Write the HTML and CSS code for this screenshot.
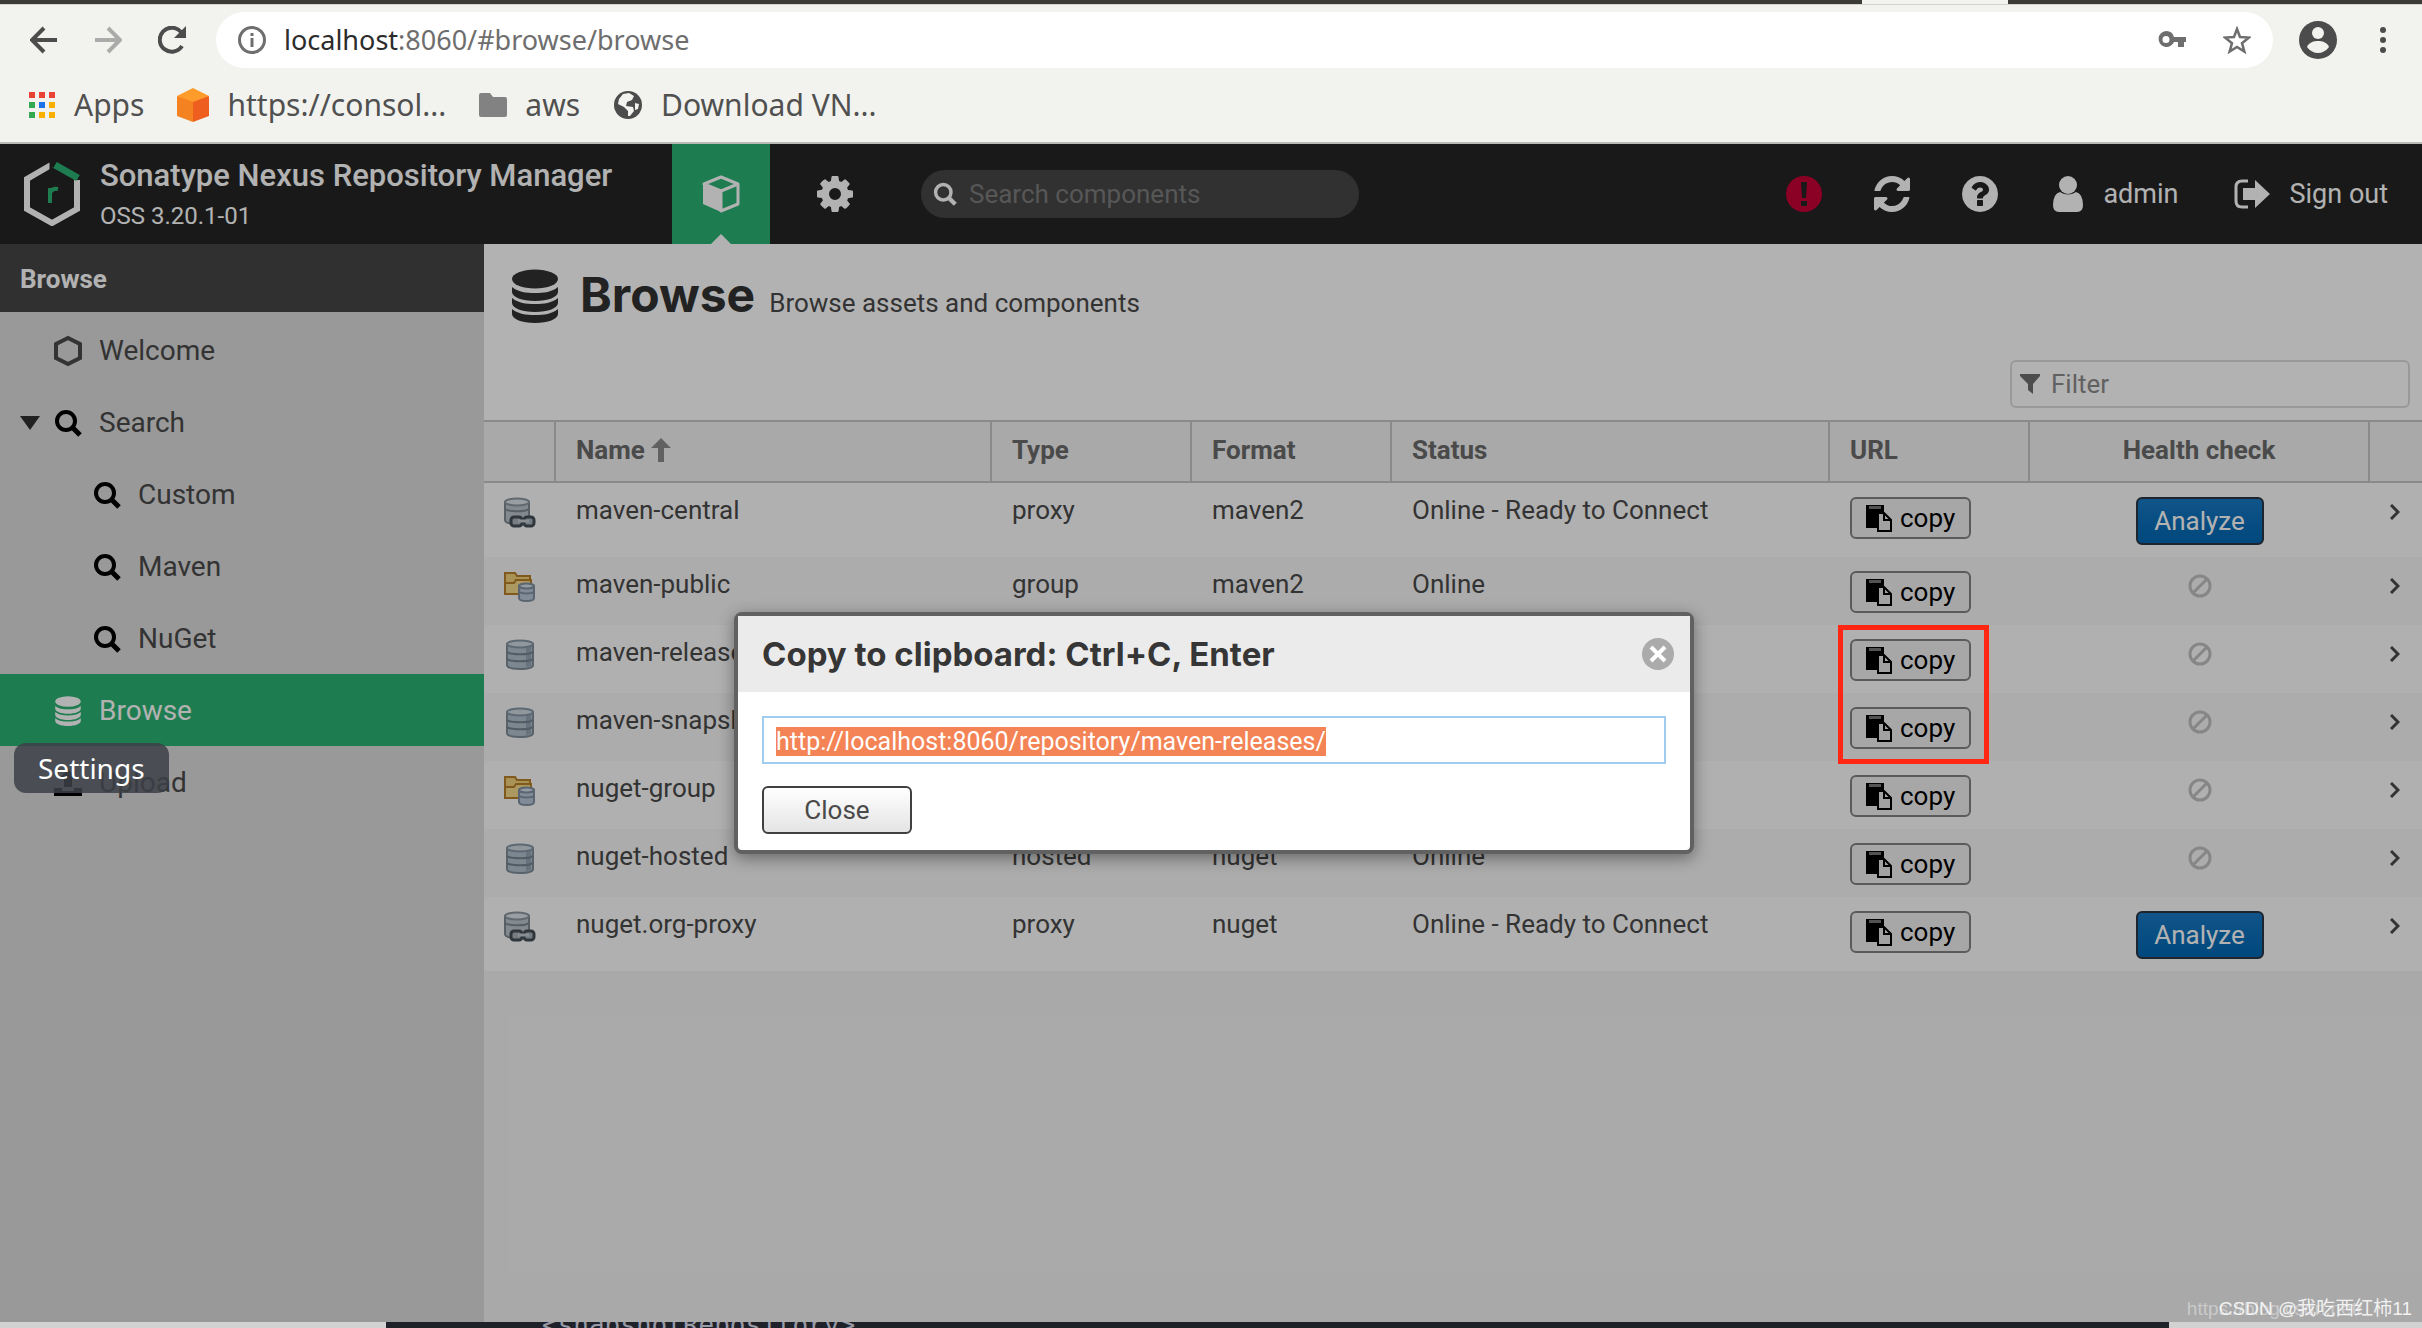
FILE: index.html
```
<!DOCTYPE html>
<html lang="en">
<head>
  <meta charset="UTF-8">
  <meta name="viewport" content="width=device-width, initial-scale=1.0">
  <title>Browse - Sonatype Nexus Repository Manager</title>
  <link rel="stylesheet" href="styles.css">
</head>
<body>
  <!-- shared icons -->
  <svg class="sprite" aria-hidden="true">
    <defs>
      <symbol id="i-search" viewBox="0 0 28 28">
        <circle cx="12" cy="12" r="9" fill="none" stroke="currentColor" stroke-width="4"/>
        <path d="M18 18l8 8" stroke="currentColor" stroke-width="5"/>
      </symbol>
      <symbol id="i-database" viewBox="0 0 46 54">
        <ellipse cx="23" cy="10" rx="23" ry="9.500"/>
        <path d="M0 18c6 5 14 6 23 6s17-1 23-6v5c0 5-10 9-23 9S0 28 0 23z"/>
        <path d="M0 29c6 5 14 6 23 6s17-1 23-6v5c0 5-10 9-23 9S0 39 0 34z"/>
        <path d="M0 40c6 5 14 6 23 6s17-1 23-6v5c0 5-10 9-23 9S0 50 0 45z"/>
      </symbol>
      <symbol id="i-paste" viewBox="0 0 26 28">
        <path d="M0 1h18v8h-6v15H0z"/>
        <path d="M3 2h12v3H3z" fill="#777"/>
        <path d="M12 9h6l7 7v11H12z" fill="#e9e9e9" stroke="currentColor" stroke-width="2"/>
        <path d="M18 9v7h7" fill="none" stroke="currentColor" stroke-width="2"/>
      </symbol>
      <symbol id="i-ban" viewBox="0 0 24 24">
        <circle cx="12" cy="12" r="10" fill="none" stroke="currentColor" stroke-width="3"/>
        <path d="M5 19L19 5" stroke="currentColor" stroke-width="3"/>
      </symbol>
      <symbol id="i-chevron" viewBox="0 0 10 16">
        <path d="M1 1l7 7-7 7" fill="none" stroke="currentColor" stroke-width="3"/>
      </symbol>
      <symbol id="i-hosted" viewBox="0 0 32 32">
        <path d="M3 5v21c0 3 6 4 13 4s13-1 13-4V5z" fill="#b4c2cf" stroke="#7f8d9a" stroke-width="2"/>
        <path d="M22 8h5v19l-5 1z" fill="#93a5b6"/>
        <ellipse cx="16" cy="5" rx="13" ry="3.500" fill="#cfdae3" stroke="#8796a4" stroke-width="2"/>
        <path d="M3 13c3 3 23 3 26 0M3 20c3 3 23 3 26 0" fill="none" stroke="#75848f" stroke-width="2"/>
      </symbol>
      <symbol id="i-proxy" viewBox="0 0 32 32">
        <path d="M1 5v18c0 3 5 4 12 4s12-1 12-4V5z" fill="#bcc6cd" stroke="#7e8a93" stroke-width="2"/>
        <ellipse cx="13" cy="5" rx="12" ry="3.500" fill="#dbe3e8" stroke="#8c979f" stroke-width="2"/>
        <path d="M1 12c3 3 21 3 24 0" fill="none" stroke="#7e8a93" stroke-width="2"/>
        <rect x="7" y="20" width="11" height="9" rx="3" fill="#aab3ba" stroke="#444e57" stroke-width="3"/>
        <rect x="20" y="20" width="10" height="9" rx="3" fill="#aab3ba" stroke="#444e57" stroke-width="3"/>
        <path d="M14 24h11" stroke="#c3ccd2" stroke-width="3"/>
      </symbol>
      <symbol id="i-group" viewBox="0 0 32 32">
        <path d="M1 2h10l2 3h13v18H1z" fill="#f3d27a" stroke="#b9802a" stroke-width="2"/>
        <path d="M1 12h9l2-3h15v14H1z" fill="#f7da8c" stroke="#b9802a" stroke-width="2"/>
        <path d="M15 15v12c0 4 15 4 15 0V15z" fill="#b9c8d8" stroke="#8391a3" stroke-width="2"/>
        <ellipse cx="22.500" cy="15" rx="7.500" ry="2.500" fill="#d5e0ea" stroke="#8391a3" stroke-width="2"/>
        <path d="M15 21c3 2 12 2 15 0" fill="none" stroke="#8391a3" stroke-width="2"/>
      </symbol>
    </defs>
  </svg>

  <!-- browser window -->
  <div class="tab-strip"><div class="active-tab"></div></div>
  <div class="toolbar">
    <button class="nav-button" aria-label="Back">
      <svg width="28" height="28" viewBox="0 0 28 28"><path d="M27 14H3M14 2L2 14l12 12" fill="none" stroke="currentColor" stroke-width="4"/></svg>
    </button>
    <button class="nav-button disabled" aria-label="Forward">
      <svg width="28" height="28" viewBox="0 0 28 28"><path d="M1 14h24M14 2l12 12-12 12" fill="none" stroke="currentColor" stroke-width="4"/></svg>
    </button>
    <button class="nav-button" aria-label="Reload">
      <svg width="28" height="28" viewBox="0 0 28 28"><path d="M24 20A12 12 0 1 1 23 6" fill="none" stroke="currentColor" stroke-width="4"/><path d="M28 0v12H16z"/></svg>
    </button>
    <div class="address-bar">
      <svg width="28" height="28" viewBox="0 0 28 28"><circle cx="14" cy="14" r="12.500" fill="none" stroke="currentColor" stroke-width="3"/><path d="M12.500 12h3v9h-3zM12.500 7h3v3h-3z"/></svg>
      <div class="address"><span class="host">localhost</span>:8060/#browse/browse</div>
      <svg width="30" height="20" viewBox="0 0 30 20"><path fill-rule="evenodd" d="M9 1a8 8 0 1 0 8 11h4v5h6v-5h2V7H17a8 8 0 0 0-8-6zm0 5a3.500 3.500 0 1 1 0 7 3.500 3.500 0 0 1 0-7z"/></svg>
      <svg width="28" height="28" viewBox="0 0 28 28"><path d="M14 3l3 8 9 .6-7 5.600 2.400 8.400L14 21l-7.400 4.600L9 17.200 2 11.600 11 11z" fill="none" stroke="currentColor" stroke-width="2.500"/></svg>
    </div>
    <button class="nav-button profile" aria-label="Profile">
      <svg width="38" height="38" viewBox="0 0 38 38"><circle cx="19" cy="19" r="19"/><circle cx="19" cy="12" r="6" fill="#f2f3ee"/><path d="M8 26c2-5 7-6 11-6s9 1 11 6c-3 4-7 6-11 6s-8-2-11-6z" fill="#f2f3ee"/></svg>
    </button>
    <button class="nav-button" aria-label="Menu">
      <svg width="6" height="26" viewBox="0 0 6 26"><circle cx="3" cy="3" r="3"/><circle cx="3" cy="13" r="3"/><circle cx="3" cy="23" r="3"/></svg>
    </button>
  </div>
  <nav class="bookmarks">
    <a href="#" class="bookmark">
      <svg width="28" height="28" viewBox="0 0 28 28">
        <path d="M1 1h6v6H1zM11 1h6v6h-6zM21 1h6v6h-6z" fill="#ea4335"/>
        <path d="M1 11h6v6H1zM1 21h6v6H1z" fill="#34a853"/><path d="M11 11h6v6h-6z" fill="#1a73e8"/>
        <path d="M21 11h6v6h-6zM11 21h6v6h-6zM21 21h6v6h-6z" fill="#fbaf00"/>
      </svg>Apps</a>
    <a href="#" class="bookmark">
      <svg width="32" height="34" viewBox="0 0 32 34"><path d="M16 0l16 8-16 9L0 8z" fill="#ff9b2b"/><path d="M0 8l16 6v20L0 28z" fill="#f58220"/><path d="M32 8l-16 6v20l16-6z" fill="#ee5f1f"/></svg>https://consol...</a>
    <a href="#" class="bookmark">
      <svg width="28" height="26" viewBox="0 0 28 26"><path d="M0 3q0-2 2-2h9l3 4h12q2 0 2 2v16q0 2-2 2H2q-2 0-2-2z" fill="#828282"/></svg>aws</a>
    <a href="#" class="bookmark">
      <svg width="30" height="30" viewBox="0 0 30 30"><circle cx="15" cy="15" r="14" fill="#4c4c4c"/><path d="M16 3l5 3-2 4-5 2-1 4 7 1 1 4-4 5-2 0v-5l-4-4-6-3 1-5 4-5zM22 13l4 1-1 5-3 1z" fill="#f2f3ee"/></svg>Download VN...</a>
  </nav>

  <div class="app">
    <header class="app-header">
      <svg class="logo" width="56" height="64" viewBox="0 0 56 64">
        <path d="M27 3L3 17v30l25 14 25-14V18" fill="none" stroke="#fff" stroke-width="6"/>
        <path d="M27 0v8" stroke="#242424" stroke-width="3"/>
        <path d="M31 3l23 13" stroke="#2bb473" stroke-width="7"/>
        <path d="M26 41V26M26 31q2-5 8-4" fill="none" stroke="#2bb473" stroke-width="4"/>
      </svg>
      <div class="product">
        <div class="product-name">Sonatype Nexus Repository Manager</div>
        <div class="product-version">OSS 3.20.1-01</div>
      </div>
      <button class="mode-button active" aria-label="Browse server contents">
        <svg width="38" height="38" viewBox="0 0 38 38"><path d="M1 9l18 7v21L1 29z" fill="#fff"/><path d="M2 9l17-7 17 7v20L19 36V16zM19 16l17-7M2 9l17 7" fill="none" stroke="#fff" stroke-width="3" stroke-linejoin="round"/></svg>
      </button>
      <button class="mode-button" aria-label="Administration">
        <svg width="42" height="42" viewBox="0 0 1792 1792"><path d="M1152 896q0-106-75-181t-181-75-181 75-75 181 75 181 181 75 181-75 75-181zm512-109v222q0 12-8 23t-20 13l-185 28q-19 54-39 91 35 50 107 138 10 12 10 25t-9 23q-27 37-99 108t-94 71q-12 0-26-9l-138-108q-44 23-91 38-16 136-29 186-7 28-36 28h-222q-14 0-24.500-8.500t-11.500-21.500l-28-184q-49-16-90-37l-141 107q-10 9-25 9-14 0-25-11-126-114-165-168-7-10-7-23 0-12 8-23 15-21 51-66.500t54-70.500q-27-50-41-99l-183-27q-13-2-21-12.500t-8-23.500v-222q0-12 8-23t19-13l186-28q14-46 39-92-40-57-107-138-10-12-10-24 0-10 9-23 26-36 98.500-107.500t94.500-71.500q13 0 26 10l138 107q44-23 91-38 16-136 29-186 7-28 36-28h222q14 0 24.500 8.500t11.500 21.500l28 184q49 16 90 37l142-107q9-9 24-9 13 0 25 10 129 119 165 170 7 8 7 22 0 12-8 23-15 21-51 66.500t-54 70.500q26 50 41 98l183 28q13 2 21 12.500t8 23.500z"/></svg>
      </button>
      <label class="quick-search">
        <svg width="24" height="24"><use href="#i-search"/></svg>
        <input type="text" placeholder="Search components" aria-label="Search components">
      </label>
      <div class="header-actions">
        <button class="header-button alert" aria-label="System status">
          <svg width="36" height="36" viewBox="0 0 36 36"><circle cx="18" cy="18" r="18"/><path d="M15 6h6l-1 16h-4zM15 25h6v5h-6z" fill="#242424"/></svg>
        </button>
        <button class="header-button" aria-label="Refresh">
          <svg width="36" height="36" viewBox="128 128 1536 1536"><path d="M1639 1056q0 5-1 7-64 268-268 434.500t-478 166.500q-146 0-282.500-55t-243.500-157l-129 129q-19 19-45 19t-45-19-19-45v-448q0-26 19-45t45-19h448q26 0 45 19t19 45-19 45l-137 137q71 66 161 102t187 36q134 0 250-65t186-179q11-17 53-117 8-23 30-23h192q13 0 22.500 9.500t9.500 22.500zm25-800v448q0 26-19 45t-45 19h-448q-26 0-45-19t-19-45 19-45l138-138q-148-137-349-137-134 0-250 65t-186 179q-11 17-53 117-8 23-30 23h-199q-13 0-22.500-9.500t-9.500-22.500v-7q65-268 270-434.500t480-166.500q146 0 284 55.500t245 156.500l130-129q19-19 45-19t45 19 19 45z"/></svg>
        </button>
        <button class="header-button" aria-label="Help">
          <svg width="36" height="36" viewBox="128 128 1536 1536"><path d="M1024 1376v-192q0-14-9-23t-23-9h-192q-14 0-23 9t-9 23v192q0 14 9 23t23 9h192q14 0 23-9t9-23zm256-672q0-88-55.500-163t-138.500-116-170-41q-243 0-371 213-15 24 8 42l132 100q7 6 19 6 16 0 25-12 53-68 86-92 34-24 86-24 48 0 85.500 26t37.500 59q0 38-20 61t-68 45q-63 28-115.500 86.500t-52.500 125.500v36q0 14 9 23t23 9h192q14 0 23-9t9-23q0-19 21.500-49.500t54.500-49.500q32-18 49-28.500t46-35 44.500-48 28-60.500 12.500-81zm384 192q0 209-103 385.500t-279.500 279.500-385.500 103-385.500-103-279.500-279.500-103-385.500 103-385.500 279.500-279.500 385.500-103 385.500 103 279.500 279.500 103 385.500z"/></svg>
        </button>
        <button class="header-button labelled">
          <svg width="30" height="36" viewBox="0 0 30 36"><ellipse cx="15" cy="9" rx="9" ry="9"/><path d="M7 16q8 5 16 0 7 2 7 13 0 7-6 7H6q-6 0-6-7 0-11 7-13z"/></svg>admin</button>
        <button class="header-button labelled">
          <svg width="36" height="30" viewBox="0 0 36 30"><path d="M14 2H8Q2 2 2 8v14q0 6 6 6h6" fill="none" stroke="currentColor" stroke-width="3"/><path d="M9 9h12V1l15 14-15 14v-8H9z"/></svg>Sign out</button>
      </div>
    </header>

    <div class="app-body">
      <aside class="sidebar">
        <div class="sidebar-title">Browse</div>
        <nav class="menu">
          <a href="#" class="menu-item"><svg width="28" height="32" viewBox="0 0 28 32"><path d="M14 3l12 6v14l-12 6-12-6V9z" fill="none" stroke="currentColor" stroke-width="4"/></svg>Welcome</a>
          <a href="#" class="menu-item expanded"><svg class="black" width="28" height="28"><use href="#i-search"/></svg>Search</a>
          <a href="#" class="menu-item child"><svg class="black" width="28" height="28"><use href="#i-search"/></svg>Custom</a>
          <a href="#" class="menu-item child"><svg class="black" width="28" height="28"><use href="#i-search"/></svg>Maven</a>
          <a href="#" class="menu-item child"><svg class="black" width="28" height="28"><use href="#i-search"/></svg>NuGet</a>
          <a href="#" class="menu-item selected"><svg width="28" height="30"><use href="#i-database"/></svg>Browse</a>
          <a href="#" class="menu-item"><svg class="black" width="28" height="28" viewBox="0 0 28 28"><path d="M14 0l9 10h-5v8h-8v-8H5zM0 19h8v3h12v-3h8v8H0z"/></svg>Upload
            <span class="launcher-tip">Settings</span></a>
        </nav>
      </aside>

      <main class="content">
        <div class="page-title">
          <svg width="46" height="54"><use href="#i-database"/></svg>
          <h1>Browse</h1>
          <p>Browse assets and components</p>
        </div>
        <div class="filter-bar">
          <label class="filter">
            <svg width="20" height="20" viewBox="0 0 20 20"><path d="M0 0h20v2l-7 8v10l-5-4v-6L0 2z"/></svg>
            <input type="text" placeholder="Filter" aria-label="Filter">
          </label>
        </div>
        <table class="repositories">
          <colgroup>
            <col class="col-icon"><col class="col-name"><col class="col-small"><col class="col-small"><col><col class="col-small"><col class="col-health"><col class="col-more">
          </colgroup>
          <thead>
            <tr>
              <th></th>
              <th>Name <svg width="20" height="24" viewBox="0 0 20 24"><path d="M10 0l10 10h-7v14H7V10H0z"/></svg></th>
              <th>Type</th>
              <th>Format</th>
              <th>Status</th>
              <th>URL</th>
              <th class="center">Health check</th>
              <th></th>
            </tr>
          </thead>
          <tbody>
            <tr>
              <td class="icon"><svg width="32" height="32"><use href="#i-proxy"/></svg></td>
              <td>maven-central</td><td>proxy</td><td>maven2</td><td>Online - Ready to Connect</td>
              <td class="action"><button class="copy-button"><svg width="26" height="28"><use href="#i-paste"/></svg>copy</button></td>
              <td class="action center"><button class="analyze-button">Analyze</button></td>
              <td class="more"><svg width="10" height="16"><use href="#i-chevron"/></svg></td>
            </tr>
            <tr>
              <td class="icon"><svg width="32" height="32"><use href="#i-group"/></svg></td>
              <td>maven-public</td><td>group</td><td>maven2</td><td>Online</td>
              <td class="action"><button class="copy-button"><svg width="26" height="28"><use href="#i-paste"/></svg>copy</button></td>
              <td class="none"><svg width="24" height="24"><use href="#i-ban"/></svg></td>
              <td class="more"><svg width="10" height="16"><use href="#i-chevron"/></svg></td>
            </tr>
            <tr>
              <td class="icon"><svg width="32" height="32"><use href="#i-hosted"/></svg></td>
              <td>maven-releases</td><td>hosted</td><td>maven2</td><td>Online</td>
              <td class="action"><button class="copy-button"><svg width="26" height="28"><use href="#i-paste"/></svg>copy</button><div class="highlight"></div></td>
              <td class="none"><svg width="24" height="24"><use href="#i-ban"/></svg></td>
              <td class="more"><svg width="10" height="16"><use href="#i-chevron"/></svg></td>
            </tr>
            <tr>
              <td class="icon"><svg width="32" height="32"><use href="#i-hosted"/></svg></td>
              <td>maven-snapshots</td><td>hosted</td><td>maven2</td><td>Online</td>
              <td class="action"><button class="copy-button"><svg width="26" height="28"><use href="#i-paste"/></svg>copy</button></td>
              <td class="none"><svg width="24" height="24"><use href="#i-ban"/></svg></td>
              <td class="more"><svg width="10" height="16"><use href="#i-chevron"/></svg></td>
            </tr>
            <tr>
              <td class="icon"><svg width="32" height="32"><use href="#i-group"/></svg></td>
              <td>nuget-group</td><td>group</td><td>nuget</td><td>Online</td>
              <td class="action"><button class="copy-button"><svg width="26" height="28"><use href="#i-paste"/></svg>copy</button></td>
              <td class="none"><svg width="24" height="24"><use href="#i-ban"/></svg></td>
              <td class="more"><svg width="10" height="16"><use href="#i-chevron"/></svg></td>
            </tr>
            <tr>
              <td class="icon"><svg width="32" height="32"><use href="#i-hosted"/></svg></td>
              <td>nuget-hosted</td><td>hosted</td><td>nuget</td><td>Online</td>
              <td class="action"><button class="copy-button"><svg width="26" height="28"><use href="#i-paste"/></svg>copy</button></td>
              <td class="none"><svg width="24" height="24"><use href="#i-ban"/></svg></td>
              <td class="more"><svg width="10" height="16"><use href="#i-chevron"/></svg></td>
            </tr>
            <tr>
              <td class="icon"><svg width="32" height="32"><use href="#i-proxy"/></svg></td>
              <td>nuget.org-proxy</td><td>proxy</td><td>nuget</td><td>Online - Ready to Connect</td>
              <td class="action"><button class="copy-button"><svg width="26" height="28"><use href="#i-paste"/></svg>copy</button></td>
              <td class="action center"><button class="analyze-button">Analyze</button></td>
              <td class="more"><svg width="10" height="16"><use href="#i-chevron"/></svg></td>
            </tr>
          </tbody>
        </table>
      </main>
    </div>

    <div class="mask">
      <div class="dialog" role="dialog" aria-labelledby="dialogTitle">
        <div class="dialog-header">
          <h2 id="dialogTitle">Copy to clipboard: Ctrl+C, Enter</h2>
          <button class="dialog-close" aria-label="Close dialog">
            <svg width="32" height="32" viewBox="0 0 32 32"><circle cx="16" cy="16" r="16" fill="#ababab"/><path d="M9 9l14 14M23 9L9 23" stroke="#fff" stroke-width="4"/></svg>
          </button>
        </div>
        <div class="dialog-body">
          <input type="text" id="repositoryUrl" class="url-field" value="http://localhost:8060/repository/maven-releases/" aria-labelledby="dialogTitle">
          <button class="close-button">Close</button>
        </div>
      </div>
    </div>
  </div>

  <!-- editor window behind the browser -->
  <div class="desktop">
    <div class="ruler left"></div>
    <div class="editor"><code>&lt;snapshotRepository&gt;</code></div>
    <div class="ruler right"></div>
  </div>
  <div class="watermark">
    <span class="watermark-url">https://blog.csdn.net/</span>
    <span>CSDN @我吃西红柿11</span>
  </div>

  <script>
    // preselect the url so that Ctrl+C works right away
    const field = document.getElementById('repositoryUrl');
    field.focus();
    field.select();
  </script>
</body>
</html>
```
FILE: styles.css
```
* {
  box-sizing: border-box;
  margin: 0;
  padding: 0;
}

body {
  display: flex;
  flex-direction: column;
  height: 100vh;
  overflow: hidden;
  position: relative;
  background-color: #f2f3ee;
  font-family: Roboto, "Liberation Sans", sans-serif;
  font-size: 26px;
  line-height: 32px;
  color: #4a4a4a;
}

svg {
  fill: currentColor;
  flex-shrink: 0;
}

button,
input {
  font: inherit;
  color: inherit;
  background: none;
  border: none;
  outline: none;
}

a {
  color: inherit;
  text-decoration: none;
}

.sprite {
  position: absolute;
  width: 0;
  height: 0;
}

/* browser chrome */
.tab-strip {
  height: 4px;
  background-color: #3c3b35;
  display: flex;
  justify-content: flex-end;
  padding-right: 414px;
}

.active-tab {
  width: 146px;
  background-color: #f2f3ee;
}

.toolbar {
  display: flex;
  align-items: center;
  gap: 36px;
  height: 72px;
  padding: 0 36px 2px 30px;
  border-top: 1px solid #d5d5d0;
  color: #4c4c4c;
}

.nav-button {
  display: flex;
}

.nav-button.disabled {
  color: #ababab;
}

.nav-button.profile {
  margin-right: 7px;
}

.address-bar {
  flex: 1;
  display: flex;
  align-items: center;
  gap: 18px;
  height: 56px;
  margin: 0 -10px 0 -6px;
  padding: 0 22px;
  border-radius: 28px;
  background-color: #fff;
  color: #6e6e6e;
  font-family: "Noto Sans", sans-serif;
  font-size: 27px;
}

.address {
  flex: 1;
}

.host {
  color: #2c2c2c;
}

.address-bar svg:last-child {
  margin-left: 18px;
}

.bookmarks {
  display: flex;
  align-items: center;
  gap: 33px;
  height: 68px;
  padding: 0 28px 8px;
  border-bottom: 2px solid #b9b9b6;
  font-family: "Noto Sans", sans-serif;
  font-size: 30px;
  color: #505050;
}

.bookmark {
  display: flex;
  align-items: center;
  gap: 18px;
}

/* application */
.app {
  flex: 1;
  min-height: 0;
  display: flex;
  flex-direction: column;
  position: relative;
}

.app-header {
  display: flex;
  align-items: center;
  height: 100px;
  padding: 0 34px 0 24px;
  background-color: #242424;
  color: #fff;
}

.product {
  margin-left: 20px;
  padding-top: 4px;
  width: 572px;
}

.product-name {
  font-size: 31px;
  line-height: 40px;
  font-weight: 500;
}

.product-version {
  font-size: 24px;
  line-height: 40px;
}

.mode-button {
  display: flex;
  align-items: center;
  justify-content: center;
  width: 98px;
  height: 100px;
  margin-right: 16px;
}

.mode-button.active {
  background-color: #2bb473;
  position: relative;
}

.mode-button.active::after {
  content: "";
  position: absolute;
  bottom: 0;
  left: 39px;
  border: 10px solid transparent;
  border-top: none;
  border-bottom-color: #fff;
}

.quick-search {
  display: flex;
  align-items: center;
  gap: 12px;
  width: 438px;
  height: 48px;
  margin-left: 21px;
  padding: 0 12px;
  border-radius: 24px;
  background-color: #474747;
}

.quick-search input {
  flex: 1;
  min-width: 0;
}

.quick-search input::placeholder {
  color: #7d7d7d;
}

.header-actions {
  display: flex;
  align-items: center;
  gap: 52px;
  margin-left: auto;
  font-size: 27px;
}

.header-button {
  display: flex;
  align-items: center;
  gap: 20px;
}

.header-button.labelled {
  margin-left: 3px;
}

.header-button.alert {
  color: #c70036;
}

.app-body {
  flex: 1;
  display: flex;
  min-height: 0;
}

.sidebar {
  width: 484px;
  background-color: #dbdbdb;
}

.sidebar-title {
  height: 68px;
  margin-bottom: 2px;
  padding: 20px;
  background-color: #464646;
  color: #fff;
  font-weight: 700;
  line-height: 30px;
}

.menu {
  font-size: 28px;
}

.menu-item {
  display: flex;
  align-items: center;
  gap: 17px;
  height: 72px;
  padding-top: 2px;
  padding-left: 54px;
  position: relative;
}

.menu-item.child {
  padding-left: 93px;
}

.menu-item.selected {
  background-color: #2bb473;
  color: #fff;
}

.menu-item .black {
  color: #000;
}

.menu-item.expanded::before {
  content: "";
  position: absolute;
  left: 20px;
  border: 10px solid transparent;
  border-bottom: none;
  border-top: 14px solid #303030;
}

.launcher-tip {
  position: absolute;
  z-index: 3;
  top: -3px;
  left: 14px;
  padding: 9px 24px;
  border-radius: 12px;
  background-color: rgba(60, 64, 70, 0.85);
  color: #fff;
  font-family: "Noto Sans", sans-serif;
  font-size: 28px;
}

.content {
  flex: 1;
  background-color: #f3f3f3;
}

.page-title {
  display: flex;
  align-items: baseline;
  height: 104px;
  padding: 16px 28px 0;
  background-color: #fff;
}

.page-title svg {
  color: #323232;
  align-self: flex-start;
  margin-top: 9px;
}

.page-title h1 {
  margin: 0 14px 0 22px;
  font-family: Inter, sans-serif;
  font-size: 48px;
  line-height: 70px;
  color: #323232;
}

.filter-bar {
  display: flex;
  justify-content: flex-end;
  padding: 12px 12px;
  background-color: #fff;
}

.filter {
  display: flex;
  align-items: center;
  gap: 11px;
  width: 400px;
  height: 48px;
  padding: 0 8px;
  border: 2px solid #dcdcdc;
  border-radius: 6px;
}

.filter svg {
  color: #6f6f6f;
}

.filter input {
  flex: 1;
  min-width: 0;
}

.filter input::placeholder {
  color: #8c8c8c;
}

.repositories {
  width: 100%;
  table-layout: fixed;
  border-collapse: collapse;
}

.col-icon {
  width: 71px;
}

.col-name {
  width: 436px;
}

.col-small {
  width: 200px;
}

.col-health {
  width: 340px;
}

.col-more {
  width: 53px;
}

th {
  height: 61px;
  padding: 0 20px 3px;
  text-align: left;
  font-weight: 700;
  color: #6a6a6a;
  background-color: #f2f2f2;
  border: 2px solid #c6c6c6;
}

th:first-child {
  border-left: none;
}

th:last-child {
  border-right: none;
}

th svg {
  color: #8c8c8c;
  vertical-align: -3px;
}

td {
  height: 68px;
  padding: 11px 20px 0 21px;
  vertical-align: top;
}

tbody tr {
  background-color: #fdfdfd;
}

tbody tr:nth-child(even) {
  background-color: #f7f7f7;
}

td svg {
  display: block;
}

td.icon {
  padding: 14px 20px 0;
}

td.action {
  padding-top: 14px;
  position: relative;
}

.center {
  text-align: center;
}

td.none {
  padding-top: 17px;
  color: #c0c0c0;
}

td.none svg {
  margin: 0 auto;
}

td.more {
  padding-top: 21px;
}

.copy-button {
  display: flex;
  align-items: center;
  gap: 8px;
  height: 42px;
  padding: 0 14px;
  border: 2px solid #838383;
  border-radius: 6px;
  background-color: #efefef;
  color: #000;
}

.analyze-button {
  display: block;
  width: 128px;
  height: 48px;
  margin: 0 auto 12px;
  border: 2px solid #2a3642;
  border-radius: 6px;
  background: linear-gradient(#197ac5, #0067b3);
  color: #fff;
}

/* frame round the two maven copy buttons */
.highlight {
  position: absolute;
  z-index: 3;
  top: 0;
  left: 9px;
  width: 151px;
  height: 139px;
  border: 5px solid #ff2614;
}

/* dialog */
.mask {
  position: absolute;
  inset: 0;
  z-index: 2;
  display: flex;
  align-items: center;
  justify-content: center;
  padding-left: 6px;
  background-color: rgba(0, 0, 0, 0.3);
}

.dialog {
  width: 960px;
  border: 4px solid #616161;
  border-radius: 8px;
  background-color: #fff;
  box-shadow: 0 4px 16px rgba(0, 0, 0, 0.4);
}

.dialog-header {
  display: flex;
  align-items: center;
  justify-content: space-between;
  height: 76px;
  padding: 0 16px 0 24px;
  background-color: #ebebeb;
}

.dialog-header h2 {
  font-family: Inter, sans-serif;
  font-size: 33px;
  color: #363636;
}

.dialog-close {
  display: flex;
}

.dialog-body {
  padding: 24px 24px 16px;
}

.url-field {
  display: block;
  width: 100%;
  height: 48px;
  margin-bottom: 22px;
  padding: 2px 12px 0;
  border: 2px solid #9fcdf0;
  font-size: 25px;
}

.url-field::selection {
  background-color: rgba(244, 130, 83, 0.99);
  color: #fff;
}

.close-button {
  width: 150px;
  height: 48px;
  border: 2px solid #404040;
  border-radius: 6px;
  background: linear-gradient(#fff, #e4e4e4);
}

/* strip of the editor visible under the window */
.desktop {
  display: flex;
  height: 6px;
  overflow: hidden;
  background-color: #d2d2d2;
}

.ruler.left {
  width: 386px;
}

.ruler.right {
  width: 253px;
}

.editor {
  flex: 1;
  padding-left: 156px;
  background-color: #20222a;
  color: #9a9ba8;
}

.editor code {
  display: block;
  margin-top: -13px;
  font-family: "DejaVu Sans Mono", monospace;
}

.watermark {
  position: absolute;
  z-index: 4;
  right: 10px;
  bottom: 3px;
  font-family: "Liberation Sans", "Noto Sans CJK SC", sans-serif;
  font-size: 19px;
  color: rgba(255, 255, 255, 0.85);
}

.watermark-url {
  position: absolute;
  left: -32px;
  color: rgba(255, 255, 255, 0.4);
}
```
